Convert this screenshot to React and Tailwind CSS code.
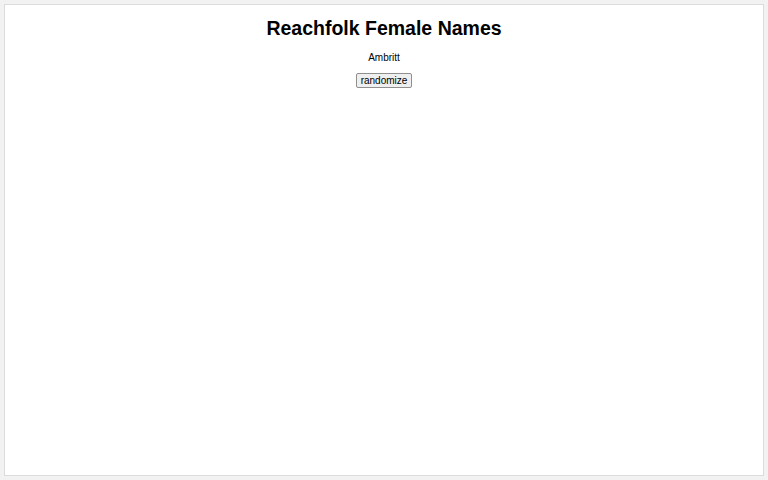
import React, { useState } from "react";

const names = ["Ambritt", "Bryling", "Deirdre", "Ffeyla", "Gwilin", "Imedhnain", "Kyra", "Lisbet"];

export default function App() {
  const [name, setName] = useState("Ambritt");

  const randomize = () => {
    setName(names[Math.floor(Math.random() * names.length)]);
  };

  return (
    <div className="h-[480px] w-full bg-[#f2f2f2] px-[4px] pt-[4px] pb-[4px] font-['Liberation_Sans',Arial,sans-serif]">
      <div className="flex h-[472px] flex-col items-center border border-[#dcdcdc] bg-white pt-[12px]">
        <h1 className="text-[19.5px] leading-[23px] font-bold text-black">Reachfolk Female Names</h1>
        <p className="mt-[12px] text-[10px] leading-[12px] text-black">{name}</p>
        <button
          onClick={randomize}
          className="mt-[9px] rounded-[2px] border border-[#8f8f8f] bg-[#efefef] px-[4px] text-[10px] leading-[13px] text-black"
        >
          randomize
        </button>
      </div>
    </div>
  );
}
